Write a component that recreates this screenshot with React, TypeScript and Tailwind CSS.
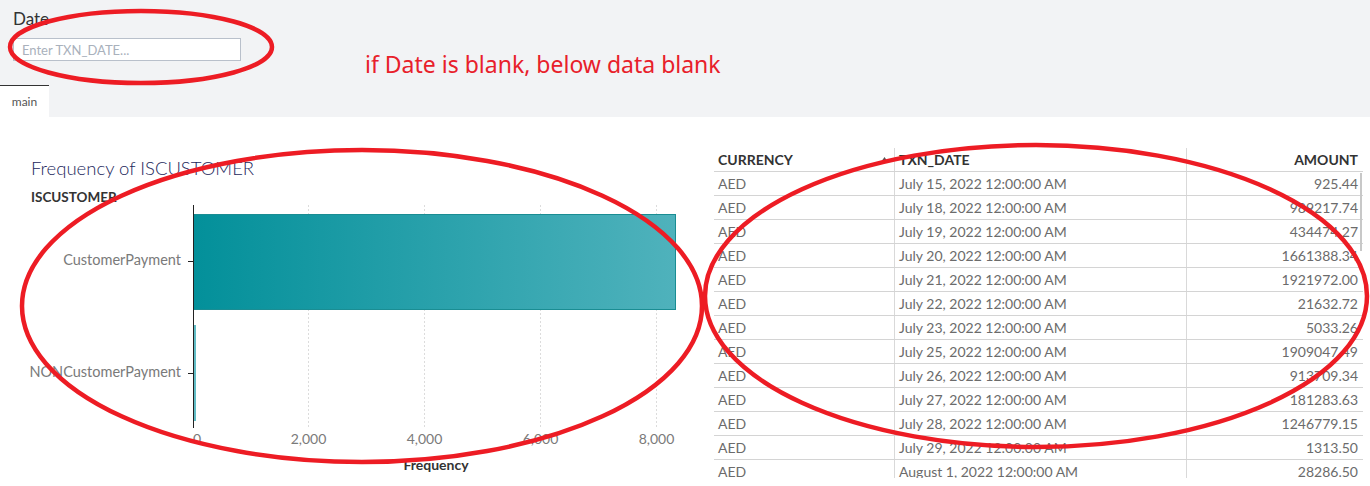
const rows = [
  ["AED", "July 15, 2022 12:00:00 AM", "925.44"],
  ["AED", "July 18, 2022 12:00:00 AM", "989217.74"],
  ["AED", "July 19, 2022 12:00:00 AM", "434474.27"],
  ["AED", "July 20, 2022 12:00:00 AM", "1661388.34"],
  ["AED", "July 21, 2022 12:00:00 AM", "1921972.00"],
  ["AED", "July 22, 2022 12:00:00 AM", "21632.72"],
  ["AED", "July 23, 2022 12:00:00 AM", "5033.26"],
  ["AED", "July 25, 2022 12:00:00 AM", "1909047.49"],
  ["AED", "July 26, 2022 12:00:00 AM", "913709.34"],
  ["AED", "July 27, 2022 12:00:00 AM", "181283.63"],
  ["AED", "July 28, 2022 12:00:00 AM", "1246779.15"],
  ["AED", "July 29, 2022 12:00:00 AM", "1313.50"],
  ["AED", "August 1, 2022 12:00:00 AM", "28286.50"],
];

const ticks = [
  { x: 197, label: "0" },
  { x: 308.5, label: "2,000" },
  { x: 424.5, label: "4,000" },
  { x: 540.5, label: "6,000" },
  { x: 656.5, label: "8,000" },
];

function FrequencyChart() {
  // page coords, shifted up by 205 (top of the svg)
  return (
    <svg width="706" height="281" className="block">
      <defs>
        <linearGradient id="barFill" x1="0" x2="1" y1="0" y2="0">
          <stop offset="0%" stopColor="#03909a" />
          <stop offset="100%" stopColor="#4fb2bc" />
        </linearGradient>
      </defs>
      {ticks.slice(1).map((t) => (
        <line
          key={t.label}
          x1={t.x}
          x2={t.x}
          y1={0}
          y2={223}
          stroke="#dcdcdc"
          strokeDasharray="2 2"
        />
      ))}
      <rect x={193.5} y={9.5} width={482} height={95} fill="url(#barFill)" stroke="#1a8d93" />
      <rect x={193} y={120} width={3} height={96} fill="#62bdc6" />
      <line x1={193.5} x2={193.5} y1={0} y2={223} stroke="#222" />
      <line x1={188} x2={193} y1={56.5} y2={56.5} stroke="#222" />
      <line x1={188} x2={193} y1={168.5} y2={168.5} stroke="#222" />
      <g fontFamily="Lato, sans-serif" fontSize="14.5" fill="#7a7a7a">
        <text x={181} y={56} textAnchor="end" dominantBaseline="middle">
          CustomerPayment
        </text>
        <text x={181} y={168} textAnchor="end" dominantBaseline="middle">
          NONCustomerPayment
        </text>
      </g>
      <g fontFamily="Lato, sans-serif" fontSize="14" fill="#7a7a7a">
        {ticks.map((t) => (
          <text key={t.label} x={t.x} y={235} textAnchor="middle" dominantBaseline="middle">
            {t.label}
          </text>
        ))}
      </g>
      <text
        x={436}
        y={261}
        textAnchor="middle"
        dominantBaseline="middle"
        fontFamily="Lato, sans-serif"
        fontSize="14"
        fontWeight="700"
        fill="#333"
      >
        Frequency
      </text>
    </svg>
  );
}

function DataTable() {
  return (
    <div className="relative mt-[31px] h-[330px] w-[649px] overflow-hidden text-[14px]">
      <div className="flex h-[24px] items-center border-b border-[#d4d4d4] text-[14px] font-bold text-[#333]">
        <div className="flex w-[180px] items-center justify-between pl-[4px] pr-[6px]">
          <span>CURRENCY</span>
          <svg width="7" height="5" viewBox="0 0 7 5">
            <path d="M0 5 L3.5 0 L7 5 Z" fill="#555" />
          </svg>
        </div>
        <div className="h-full w-[292px] border-l border-[#d9d9d9] pl-[4px] leading-[23px]">TXN_DATE</div>
        <div className="h-full flex-1 border-l border-[#d9d9d9] pr-[5px] text-right leading-[23px]">AMOUNT</div>
      </div>
      {rows.map((r, i) => (
        <div key={i} className="flex h-[24px] border-b border-[#d4d4d4] text-[#6b6b6b]">
          <div className="w-[180px] pl-[4px] leading-[23px]">{r[0]}</div>
          <div className="w-[292px] border-l border-[#d9d9d9] pl-[4px] leading-[23px]">{r[1]}</div>
          <div className="flex-1 border-l border-[#d9d9d9] pr-[5px] text-right leading-[23px]">{r[2]}</div>
        </div>
      ))}
      <div className="absolute left-[646px] top-[25px] h-[78px] w-[2px] bg-[#c8c8c8]" />
    </div>
  );
}

export default function App() {
  return (
    <div className="relative h-[486px] w-[1370px] overflow-hidden bg-white font-['Lato',sans-serif]">
      <div className="flex h-[117px] flex-col bg-[#f2f3f5]">
        <div className="flex h-[85px]">
          <div className="pl-[13px] pt-[8px]">
            <div className="text-[17px] leading-[21px] text-[#333]">Date</div>
            <input
              className="mt-[9px] h-[23px] w-[228px] border border-[#b9c0cb] bg-white px-[8px] text-[13px] text-[#333] outline-none placeholder:text-[#a9b1bc]"
              placeholder="Enter TXN_DATE..."
            />
          </div>
          <div className="ml-[124px] pt-[49px] font-['Noto_Sans',sans-serif] text-[23px] leading-[30px] text-[#e8202a]">
            if Date is blank, below data blank
          </div>
        </div>
        <div className="flex h-[32px]">
          <div className="flex w-[49px] items-center justify-center border-t border-[#333] bg-white text-[12px] text-[#555]">
            main
          </div>
        </div>
      </div>

      <div className="flex">
        <div className="w-[714px] shrink-0">
          <div className="pl-[31px] pt-[40px] text-[18.5px] font-light leading-[23px] text-[#23285c]">Frequency of ISCUSTOMER</div>
          <div className="mt-[10px] pl-[31px] text-[13.5px] font-bold leading-[15px] text-[#333]">ISCUSTOMER</div>
          <FrequencyChart />
        </div>
        <DataTable />
      </div>

      <svg className="pointer-events-none absolute inset-0" width="1370" height="486">
        <g fill="none" stroke="#ed1c24" strokeWidth="4.5">
          <ellipse cx={141} cy={47} rx={131} ry={36} />
          <ellipse cx={362} cy={306} rx={340} ry={156} />
          <ellipse cx={1036} cy={296} rx={331} ry={151} />
        </g>
      </svg>
    </div>
  );
}
